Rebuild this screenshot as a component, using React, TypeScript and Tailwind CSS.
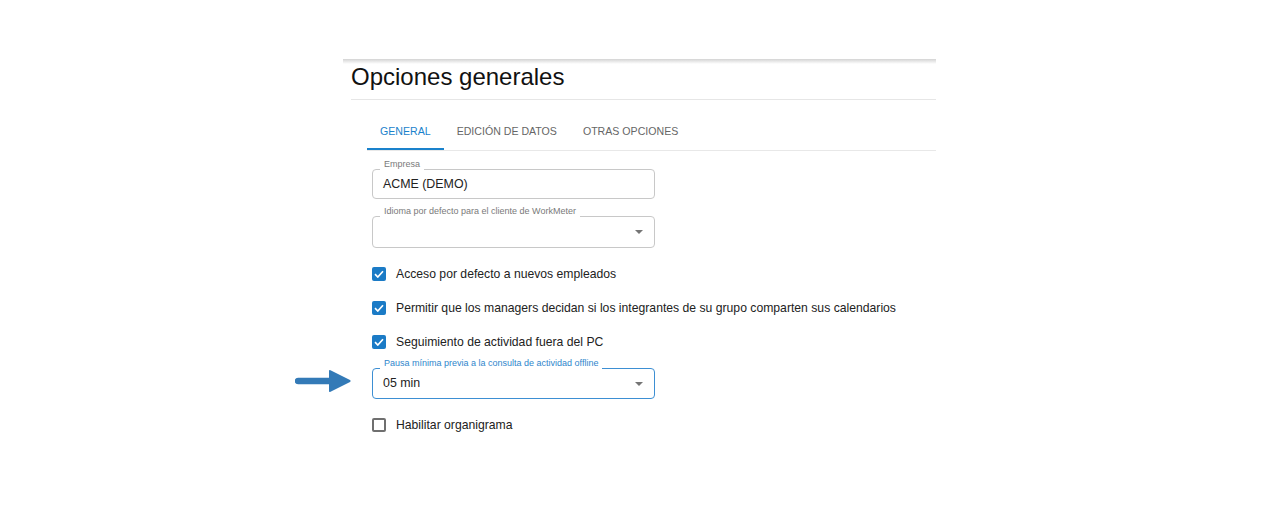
import { useState } from "react";

const FONT = { fontFamily: '"Liberation Sans", Arial, sans-serif' };

function Caret() {
  return (
    <svg width="8" height="4" viewBox="0 0 8 4" className="absolute right-[11px] top-1/2 -translate-y-1/2">
      <path d="M0 0 L8 0 L4 4 Z" fill="#757575" />
    </svg>
  );
}

function Field({
  label,
  value,
  focused,
  select,
  height,
}: {
  label: string;
  value?: string;
  focused?: boolean;
  select?: boolean;
  height: string;
}) {
  return (
    <div
      className={`relative w-[283px] ${height} rounded-[4px] border ${
        focused ? "border-[#3d8fd3]" : "border-[#c8c8c8]"
      } flex items-center px-[10px]`}
    >
      <span
        className={`absolute left-[7px] -top-[11px] bg-white px-[4px] pb-[3px] text-[9px] leading-[10px] ${
          focused ? "text-[#2f86cc]" : "text-[#7a7a7a]"
        }`}
      >
        {label}
      </span>
      <span className="text-[12.4px] text-[#222]">{value}</span>
      {select && <Caret />}
    </div>
  );
}

function Check({ checked, label }: { checked: boolean; label: string }) {
  return (
    <div className="flex items-center gap-[10px] h-[14px]">
      {checked ? (
        <span className="w-[14px] h-[14px] rounded-[2px] bg-[#1b7bc6] flex items-center justify-center">
          <svg width="10" height="8" viewBox="0 0 10 8">
            <path d="M1 4.2 L3.8 7 L9 1.3" fill="none" stroke="white" strokeWidth="1.7" />
          </svg>
        </span>
      ) : (
        <span className="w-[14px] h-[14px] rounded-[2px] border-2 border-[#6f6f6f] bg-white" />
      )}
      <span className="text-[12.2px] text-[#222]">{label}</span>
    </div>
  );
}

export default function App() {
  const [tab, setTab] = useState(0);
  const tabs = ["GENERAL", "EDICIÓN DE DATOS", "OTRAS OPCIONES"];

  return (
    <div className="w-[1280px] h-[510px] bg-white overflow-hidden" style={FONT}>
      <div className="ml-[343px] w-[593px] pt-[59px]">
        <div className="h-[5px] bg-gradient-to-b from-[#d4d4d4] to-white" />
        <h1 className="ml-[8px] text-[24px] leading-[28px] text-[#111] -mt-[1px]">Opciones generales</h1>
        <div className="ml-[8px] mt-[8px] h-px bg-[#e6e6e6]" />

        <div className="ml-[24px] mt-[11px] flex border-b border-[#e8e8e8]">
          {tabs.map((t, i) => (
            <button
              key={t}
              onClick={() => setTab(i)}
              className={`h-[39px] pt-[4px] px-[13px] border-b-2 text-[10.6px] ${
                tab === i ? "border-[#1a82cc] text-[#1a82cc]" : "border-transparent text-[#666]"
              }`}
            >
              {t}
            </button>
          ))}
        </div>

        <div className="ml-[29px] pt-[18px] flex flex-col">
          <Field label="Empresa" value="ACME (DEMO)" height="h-[30px]" />
          <div className="mt-[17px]">
            <Field label="Idioma por defecto para el cliente de WorkMeter" select height="h-[32px]" />
          </div>
          <div className="mt-[19px] flex flex-col gap-[20px]">
            <Check checked label="Acceso por defecto a nuevos empleados" />
            <Check checked label="Permitir que los managers decidan si los integrantes de su grupo comparten sus calendarios" />
            <Check checked label="Seguimiento de actividad fuera del PC" />
          </div>
          <div className="relative mt-[19px]">
            <svg
              width="58"
              height="24"
              viewBox="0 0 58 24"
              className="absolute -left-[77px] top-[1px]"
            >
              <path d="M3 12 H36" stroke="#337ab7" strokeWidth="6.5" strokeLinecap="round" />
              <path d="M34 2 Q34 0.5 35.5 1.3 L55 11 Q56.5 12 55 13 L35.5 22.7 Q34 23.5 34 22 Z" fill="#337ab7" />
            </svg>
            <Field label="Pausa mínima previa a la consulta de actividad offline" value="05 min" focused select height="h-[31px]" />
          </div>
          <div className="mt-[19px]">
            <Check checked={false} label="Habilitar organigrama" />
          </div>
        </div>
      </div>
    </div>
  );
}
